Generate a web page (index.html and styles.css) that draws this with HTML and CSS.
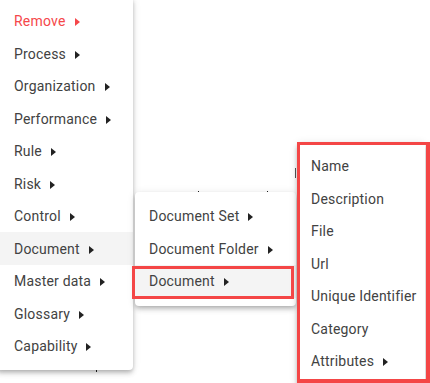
FILE: index.html
```html
<!DOCTYPE html>
<html>
<head>
<meta charset="utf-8">
<link rel="stylesheet" href="styles.css">
</head>
<body>
<div class="stage">
  <span class="tick t1"></span>
  <span class="tick t2"></span>
  <span class="tick t3"></span>
  <span class="tick t4"></span>

  <ul class="menu main">
    <li class="item danger">Remove<i class="caret"></i></li>
    <li class="item">Process<i class="caret"></i></li>
    <li class="item">Organization<i class="caret"></i></li>
    <li class="item">Performance<i class="caret"></i></li>
    <li class="item">Rule<i class="caret"></i></li>
    <li class="item">Risk<i class="caret"></i></li>
    <li class="item">Control<i class="caret"></i></li>
    <li class="item active">Document<i class="caret"></i></li>
    <li class="item">Master data<i class="caret"></i></li>
    <li class="item">Glossary<i class="caret"></i></li>
    <li class="item">Capability<i class="caret"></i></li>
  </ul>

  <ul class="menu sub1">
    <li class="item">Document Set<i class="caret"></i></li>
    <li class="item">Document Folder<i class="caret"></i></li>
    <li class="item active">Document<i class="caret"></i></li>
  </ul>

  <ul class="menu sub2">
    <li class="item">Name</li>
    <li class="item">Description</li>
    <li class="item">File</li>
    <li class="item">Url</li>
    <li class="item">Unique Identifier</li>
    <li class="item">Category</li>
    <li class="item">Attributes<i class="caret"></i></li>
  </ul>

  <div class="mark mark1"></div>
  <div class="mark mark2"></div>
</div>
</body>
</html>
```
FILE: styles.css
```css
html, body {
  margin: 0;
  padding: 0;
  background: #ffffff;
}
body {
  width: 430px;
  height: 383px;
  overflow: hidden;
  font-family: Roboto, "Liberation Sans", Arial, sans-serif;
  font-size: 14px;
  color: #424242;
}
.stage {
  position: relative;
  width: 430px;
  height: 383px;
  overflow: hidden;
}
.menu {
  position: absolute;
  margin: 0;
  padding: 8px 0;
  list-style: none;
  background: #ffffff;
  border-radius: 4px;
  box-shadow: 0 2px 4px -1px rgba(0,0,0,0.2), 0 4px 5px 0 rgba(0,0,0,0.12), 0 1px 8px 0 rgba(0,0,0,0.1);
  box-sizing: border-box;
}
.main {
  left: -4px;
  top: -3.25px;
  width: 137px;
}
.main .item {
  padding-left: 18px;
}
.sub1 {
  left: 135px;
  top: 192px;
  width: 161px;
}
.sub2 {
  left: 297px;
  top: 142px;
  width: 128px;
}
.item {
  display: flex;
  align-items: center;
  height: 32.5px;
  padding: 0 14px;
  white-space: nowrap;
  letter-spacing: 0.2px;
}
.item.active {
  background: #f4f4f4;
}
.item.danger {
  color: #f5474a;
}
.caret {
  display: inline-block;
  width: 0;
  height: 0;
  margin-left: 9px;
  margin-top: 2px;
  border-top: 4px solid transparent;
  border-bottom: 4px solid transparent;
  border-left: 5px solid #222222;
}
.danger .caret {
  border-left-color: #f5474a;
}
.mark {
  position: absolute;
  box-sizing: border-box;
  border: 3px solid #f44646;
}
.mark1 {
  left: 132px;
  top: 266px;
  width: 162px;
  height: 33px;
}
.mark2 {
  left: 297px;
  top: 142px;
  width: 133px;
  height: 241px;
  border-right-width: 4px;
  border-bottom-width: 4px;
}
.tick {
  position: absolute;
  width: 1px;
  background: #222222;
}
.t1 { left: 198px; top: 191px; height: 3px; }
.t2 { left: 267px; top: 191px; height: 3px; }
.t3 { left: 295px; top: 168px; height: 10px; background: #555; }
.t4 { left: 96px; top: 369px; height: 3px; }
```
